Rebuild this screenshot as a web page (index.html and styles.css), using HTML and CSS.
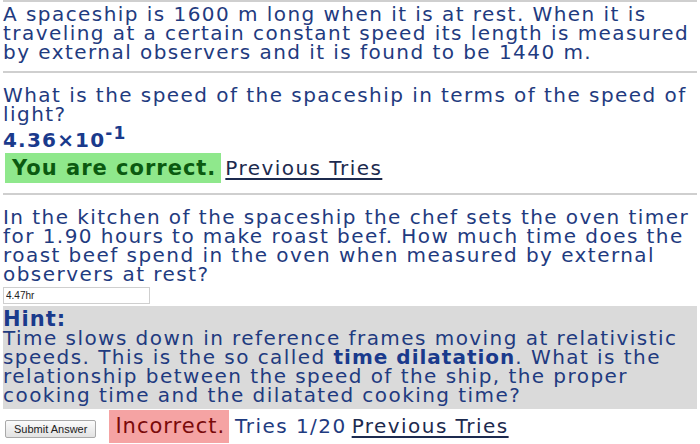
FILE: index.html
```html
<!DOCTYPE html>
<html>
<head>
<meta charset="utf-8">
<link rel="stylesheet" href="styles.css">
</head>
<body>
<div class="page">
  <hr class="rule">
  <p class="text">A spaceship is 1600 m long when it is at rest. When it is traveling at a certain constant speed its length is measured by external observers and it is found to be 1440 m.</p>
  <hr class="rule">
  <p class="text q">What is the speed of the spaceship in terms of the speed of light?</p>
  <div class="answer">4.36×10<sup>-1</sup></div>
  <div class="status">
    <span class="correct">You are correct.</span>
    <a class="tries-link" href="#">Previous Tries</a>
  </div>
  <hr class="rule">
  <p class="text q">In the kitchen of the spaceship the chef sets the oven timer for 1.90 hours to make roast beef. How much time does the roast beef spend in the oven when measured by external observers at rest?</p>
  <input class="field" type="text" value="4.47hr">
  <div class="hint">
    <div class="hint-title">Hint:</div>
    <div class="text">Time slows down in reference frames moving at relativistic speeds. This is the so called <b>time dilatation</b>. What is the relationship between the speed of the ship, the proper cooking time and the dilatated cooking time?</div>
  </div>
  <div class="status submit-row">
    <button class="submit" type="button">Submit Answer</button>
    <span class="incorrect">Incorrect.</span>
    <span class="tries">Tries 1/20</span>
    <a class="tries-link" href="#">Previous Tries</a>
  </div>
</div>
</body>
</html>
```
FILE: styles.css
```css
html, body {
  margin: 0;
  padding: 0;
  background: #ffffff;
}
.page {
  padding: 0 3px;
  font-family: "DejaVu Sans", sans-serif;
  font-size: 20px;
  line-height: 19px;
  letter-spacing: 1.45px;
  color: #1f3b80;
}
.rule {
  margin: 0;
  border: none;
  border-top: 2px solid #cfcfcf;
  height: 0;
}
.text {
  margin: 0;
}
p.text {
  padding: 3px 0 9px;
}
p.q {
  padding-top: 13px;
  padding-bottom: 0;
}
.answer {
  font-weight: bold;
  color: #1a3a8c;
  padding-top: 6px;
  line-height: 20px;
  letter-spacing: 1.2px;
}
.answer sup {
  font-size: 17px;
  line-height: 0;
  vertical-align: 8px;
}
.status {
  display: flex;
  align-items: center;
  gap: 4px;
  padding: 2px 2px 0;
  height: 32px;
}
.correct {
  background: #8fe88c;
  color: #0b5a10;
  font-weight: bold;
  font-size: 21px;
  letter-spacing: 1px;
  padding: 0 5px 0 7px;
  line-height: 30px;
}
.tries-link {
  color: #1c2a4e;
  text-decoration: underline;
  text-decoration-thickness: 2px;
  text-underline-offset: 3px;
}
.status + .rule {
  margin-top: 9px;
}
.field {
  display: block;
  margin: 3px 0 0;
  width: 147px;
  height: 17px;
  box-sizing: border-box;
  border: 1px solid #cfcfcf;
  padding: 0 2px;
  font-family: "Liberation Sans", Arial, sans-serif;
  font-size: 10px;
  letter-spacing: 0;
  color: #222;
}
.hint {
  margin-top: 2px;
  background: #dadada;
  padding: 4px 0 4px;
}
.hint-title {
  font-weight: bold;
  font-size: 21px;
  color: #1a3a8c;
  letter-spacing: 1px;
}
.hint b {
  color: #1a3a8c;
  letter-spacing: 1px;
}
.submit-row {
  padding: 0 2px;
  height: 34px;
  gap: 5px;
}
.submit {
  font-family: "Liberation Sans", Arial, sans-serif;
  font-size: 11px;
  letter-spacing: 0;
  color: #222;
  background: linear-gradient(#fbfbfb, #e2e2e2);
  border: 1px solid #a9a9a9;
  border-radius: 2px;
  height: 18px;
  padding: 0 8px;
  margin-right: 8px;
  margin-top: 6px;
}
.incorrect {
  background: #f5a3a3;
  color: #7a0a0a;
  font-size: 21px;
  letter-spacing: 1px;
  padding: 0 4px 0 6px;
  line-height: 33px;
}
.tries {
  font-size: 20px;
  margin-left: 1px;
}
```
